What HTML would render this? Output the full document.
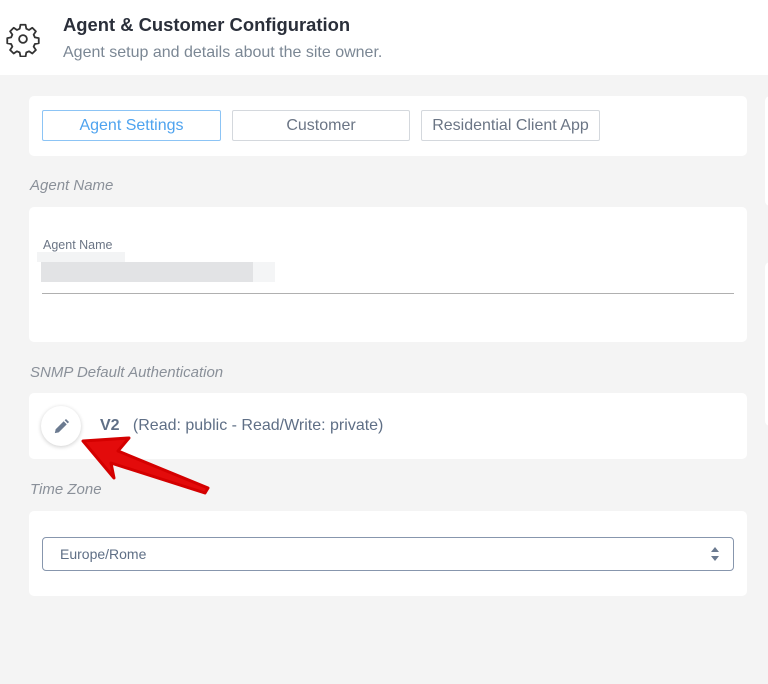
<!DOCTYPE html>
<html><head><meta charset="utf-8"><style>
*{box-sizing:border-box;margin:0;padding:0}
body{width:768px;height:684px;overflow:hidden;background:#f4f4f4;font-family:"Liberation Sans",sans-serif;position:relative}
.hdr{position:absolute;left:0;top:0;width:768px;height:75px;background:#fff}
.t1{position:absolute;left:63px;top:14px;font-size:18.4px;font-weight:bold;color:#2a2f3a}
.t2{position:absolute;left:63px;top:44px;font-size:16px;color:#7b8794}
.card{position:absolute;left:29px;width:718px;background:#fff;border-radius:5px}
.btn{position:absolute;top:14px;height:31px;border:1px solid #d4d8dd;border-radius:2px;font-size:16px;color:#6b7585;text-align:center;line-height:29px}
.lbl{position:absolute;left:30px;font-size:15px;font-style:italic;color:#8a9099}
.blk{position:absolute;height:20px;background:#e3e4e6}
</style></head><body>
<div class="hdr">
<svg style="position:absolute;left:5px;top:21px" width="36" height="36" viewBox="0 0 24 24" fill="none" stroke="#333" stroke-width="1.2" stroke-linejoin="round"><path d="M10.3 2.5h3.4l.5 2.6 1.8.9 2.2-1.5 2.4 2.4-1.5 2.2.8 1.8 2.6.5v3.4l-2.6.5-.8 1.8 1.5 2.2-2.4 2.4-2.2-1.5-1.8.8-.5 2.7h-3.4l-.5-2.7-1.8-.8-2.2 1.5-2.4-2.4 1.5-2.2-.8-1.8-2.6-.5v-3.4l2.6-.5.8-1.8-1.5-2.200 2.4-2.4 2.2 1.5 1.8-.9z"/><circle cx="12" cy="12" r="2.6"/></svg>
<div class="t1">Agent &amp; Customer Configuration</div>
<div class="t2">Agent setup and details about the site owner.</div>
</div>
<div class="card" style="top:96px;height:60px">
<div class="btn" style="left:13px;width:179px;border-color:#8cc4f5;color:#4ea3ef">Agent Settings</div>
<div class="btn" style="left:203px;width:178px">Customer</div>
<div class="btn" style="left:392px;width:179px">Residential Client App</div>
</div>
<div style="position:absolute;left:765px;top:96px;width:10px;height:110px;background:#fff;border-radius:5px"></div>
<div style="position:absolute;left:765px;top:262px;width:10px;height:164px;background:#fff;border-radius:5px"></div>
<div class="lbl" style="top:177px">Agent Name</div>
<div class="card" style="top:207px;height:135px">
<div style="position:absolute;left:14px;top:31px;font-size:12.5px;color:#6b7585">Agent Name</div>
<div class="blk" style="left:8px;top:45px;width:88px;height:10px;background:#f3f4f5"></div>
<div class="blk" style="left:12px;top:55px;width:212px;background:#e2e3e5"></div>
<div class="blk" style="left:224px;top:55px;width:22px;background:#f4f5f6"></div>
<div style="position:absolute;left:13px;top:86px;width:692px;height:1px;background:#b0b0b0"></div>
</div>
<div class="lbl" style="top:364px">SNMP Default Authentication</div>
<div class="card" style="top:393px;height:66px">
<div style="position:absolute;left:12px;top:13px;width:40px;height:40px;border-radius:50%;background:#fff;box-shadow:0 1px 4px rgba(0,0,0,.2)"></div>
<svg style="position:absolute;left:24px;top:25px" width="17" height="17" viewBox="0 0 14 14"><path d="M1.5 12.5l.7-3.2 6.6-6.6 2.5 2.5-6.6 6.6z" fill="#6b7a90"/><path d="M9.6 1.9l1.1-1.1 2.5 2.5-1.1 1.1z" fill="#6b7a90"/></svg>
<div style="position:absolute;left:71px;top:24px;font-size:16px;color:#5f6f86"><b>V2</b>&nbsp;&nbsp; (Read: public - Read/Write: private)</div>
</div>
<div class="lbl" style="top:481px">Time Zone</div>
<div class="card" style="top:511px;height:85px">
<div style="position:absolute;left:13px;top:26px;width:692px;height:34px;border:1px solid #8796ad;border-radius:4px">
<div style="position:absolute;left:17px;top:8px;font-size:14px;color:#5f6f86">Europe/Rome</div>
<svg style="position:absolute;right:13px;top:7px" width="10" height="18" viewBox="0 0 10 18"><path d="M5 2l4 5H1z M5 16l4-5H1z" fill="#6b7a90"/></svg>
</div>
</div>
<svg style="position:absolute;left:0;top:0" width="768" height="684"><path d="M83 441 L129 438 L118 451 L208 488 L205 493 L111 463 L114 478 Z" fill="#e30b0b" stroke="#d40000" stroke-width="3" stroke-linejoin="round"/></svg>
</body></html>
